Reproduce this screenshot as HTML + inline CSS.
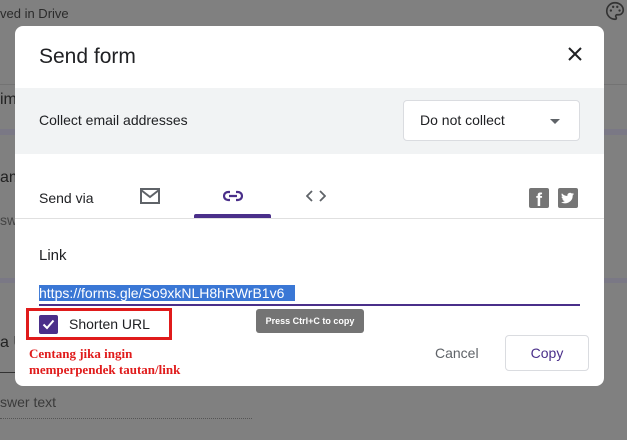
<!DOCTYPE html>
<html><head><meta charset="utf-8"><style>
*{margin:0;padding:0;box-sizing:border-box}
body{width:627px;height:440px;overflow:hidden;background:#808080;font-family:"Liberation Sans",sans-serif;position:relative}
.a{position:absolute}
.dlg{left:15px;top:26px;width:589px;height:360px;background:#fff;border-radius:8px;overflow:hidden}
</style></head><body>
<div class="a" style="left:0;top:6px;font-size:13px;color:#2b2b2b">ved in Drive</div>
<svg class="a" style="left:604px;top:0" width="22" height="22" viewBox="0 0 24 24"><path d="M12 3a9 9 0 0 0 0 18c1 0 1.5-.7 1.5-1.4 0-.4-.2-.7-.4-1-.2-.3-.4-.6-.4-1 0-.8.7-1.5 1.5-1.5H16a5 5 0 0 0 5-5C21 6.6 17 3 12 3z" fill="none" stroke="#333" stroke-width="1.8"/><circle cx="7.5" cy="11.5" r="1.3" fill="#333"/><circle cx="10" cy="7.5" r="1.3" fill="#333"/><circle cx="14.5" cy="7.5" r="1.3" fill="#333"/><circle cx="17" cy="11.5" r="1.3" fill="#333"/></svg>
<div class="a" style="left:0;top:84px;width:627px;height:1px;background:#737373"></div>
<div class="a" style="left:0;top:91px;font-size:16px;color:#222">im</div>
<div class="a" style="left:0;top:129px;width:627px;height:6px;background:#7a7885"></div>
<div class="a" style="left:0;top:169px;font-size:16px;color:#222">am</div>
<div class="a" style="left:0;top:212px;font-size:14px;color:#444">sw</div>
<div class="a" style="left:0;top:278px;width:627px;height:5px;background:#7a7885"></div>
<div class="a" style="left:0;top:334px;font-size:16px;color:#222">a U</div>
<div class="a" style="left:0;top:372px;width:20px;height:1px;background:#333"></div>
<div class="a" style="left:0;top:394px;font-size:14px;color:#3a3a3a">swer text</div>
<div class="a" style="left:0;top:418px;width:252px;border-top:1px dotted #555"></div>

<div class="a dlg">
 <div class="a" style="left:24px;top:19px;font-size:21px;color:#202124">Send form</div>
 <svg class="a" style="left:552px;top:20px" width="16" height="16" viewBox="0 0 16 16"><path d="M2 2L14 14M14 2L2 14" stroke="#202124" stroke-width="2"/></svg>
 <div class="a" style="left:0;top:62px;width:589px;height:66px;background:#f1f3f4"></div>
 <div class="a" style="left:24px;top:86px;font-size:14px;color:#202124">Collect email addresses</div>
 <div class="a" style="left:388px;top:74px;width:177px;height:41px;background:#fff;border:1px solid #dadce0;border-radius:4px"></div>
 <div class="a" style="left:405px;top:86px;font-size:14px;color:#202124">Do not collect</div>
 <div class="a" style="left:535px;top:93px;width:0;height:0;border-left:5px solid transparent;border-right:5px solid transparent;border-top:5px solid #5f6368"></div>
 <div class="a" style="left:24px;top:164px;font-size:14px;color:#202124">Send via</div>
 <svg class="a" style="left:125px;top:162px" width="20" height="16" viewBox="0 0 20 16"><rect x="1" y="1" width="18" height="14" fill="none" stroke="#5f6368" stroke-width="2"/><path d="M1 2L10 9L19 2" fill="none" stroke="#5f6368" stroke-width="2"/></svg>
 <svg class="a" style="left:208px;top:164px" width="20" height="12" viewBox="0 0 20 12"><path d="M7 2H5a4 4 0 0 0 0 8h2M13 2h2a4 4 0 0 1 0 8h-2M6 6h8" fill="none" stroke="#4a2f8a" stroke-width="2.2"/></svg>
 <svg class="a" style="left:291px;top:164px" width="20" height="12" viewBox="0 0 20 12"><path d="M6 1L1 6L6 11M14 1L19 6L14 11" fill="none" stroke="#5f6368" stroke-width="1.8"/></svg>
 <div class="a" style="left:179px;top:188px;width:77px;height:4px;background:#4a2f8a;border-radius:2px 2px 0 0"></div>
 <div class="a" style="left:0;top:192px;width:589px;height:1px;background:#e0e0e0"></div>
 <div class="a" style="left:514px;top:162px;width:20px;height:20px;background:#757575;border-radius:2px;color:#fff;font-weight:bold;font-size:18px;text-align:center;line-height:24px">f</div>
 <svg class="a" style="left:543px;top:162px" width="20" height="20" viewBox="0 0 20 20"><rect width="20" height="20" rx="2" fill="#757575"/><path d="M16 6c-.5.2-1 .4-1.5.4.6-.4 1-.9 1.2-1.5-.5.3-1.1.5-1.7.7a2.7 2.7 0 0 0-4.6 2.4A7.6 7.6 0 0 1 3.9 5.2a2.7 2.7 0 0 0 .8 3.6c-.4 0-.9-.1-1.2-.3 0 1.3.9 2.4 2.1 2.6-.4.1-.8.1-1.2 0 .3 1.1 1.3 1.8 2.5 1.9A5.4 5.4 0 0 1 3 14.1a7.6 7.6 0 0 0 11.7-6.4v-.3c.5-.4 1-.9 1.3-1.4z" fill="#fff"/></svg>
 <div class="a" style="left:24px;top:221px;font-size:15px;color:#202124">Link</div>
 <div class="a" style="left:24px;top:259px;width:256px;height:16px;background:#3a77d5"></div>
 <div class="a" style="left:24px;top:259px;font-size:14px;line-height:16px;color:#fff">https://forms.gle/So9xkNLH8hRWrB1v6</div>
 <div class="a" style="left:24px;top:278px;width:541px;height:2px;background:#4a2f8a"></div>
 <div class="a" style="left:11px;top:282px;width:146px;height:32px;border:3px solid #e01b1b"></div>
 <div class="a" style="left:24px;top:289px;width:19px;height:19px;background:#4a2f8a;border-radius:2px"></div>
 <svg class="a" style="left:27px;top:292px" width="13" height="13" viewBox="0 0 13 13"><path d="M1.5 6.5L5 10L11.5 2.5" fill="none" stroke="#fff" stroke-width="2"/></svg>
 <div class="a" style="left:54px;top:290px;font-size:14px;color:#202124">Shorten URL</div>
 <div class="a" style="left:241px;top:283px;width:108px;height:24px;background:#747474;border-radius:3px;color:#fff;font-size:9px;font-weight:bold;text-align:center;line-height:24px">Press Ctrl+C to copy</div>
 <div class="a" style="left:14px;top:320px;font-family:'Liberation Serif',serif;font-weight:bold;font-size:13px;color:#e01b1b;line-height:16px">Centang jika ingin<br>memperpendek tautan/link</div>
 <div class="a" style="left:420px;top:319px;font-size:14px;color:#5f6368">Cancel</div>
 <div class="a" style="left:490px;top:309px;width:84px;height:36px;border:1px solid #dadce0;border-radius:4px;color:#4a2f8a;font-size:14px;text-align:center;line-height:34px">Copy</div>
</div>
</body></html>
